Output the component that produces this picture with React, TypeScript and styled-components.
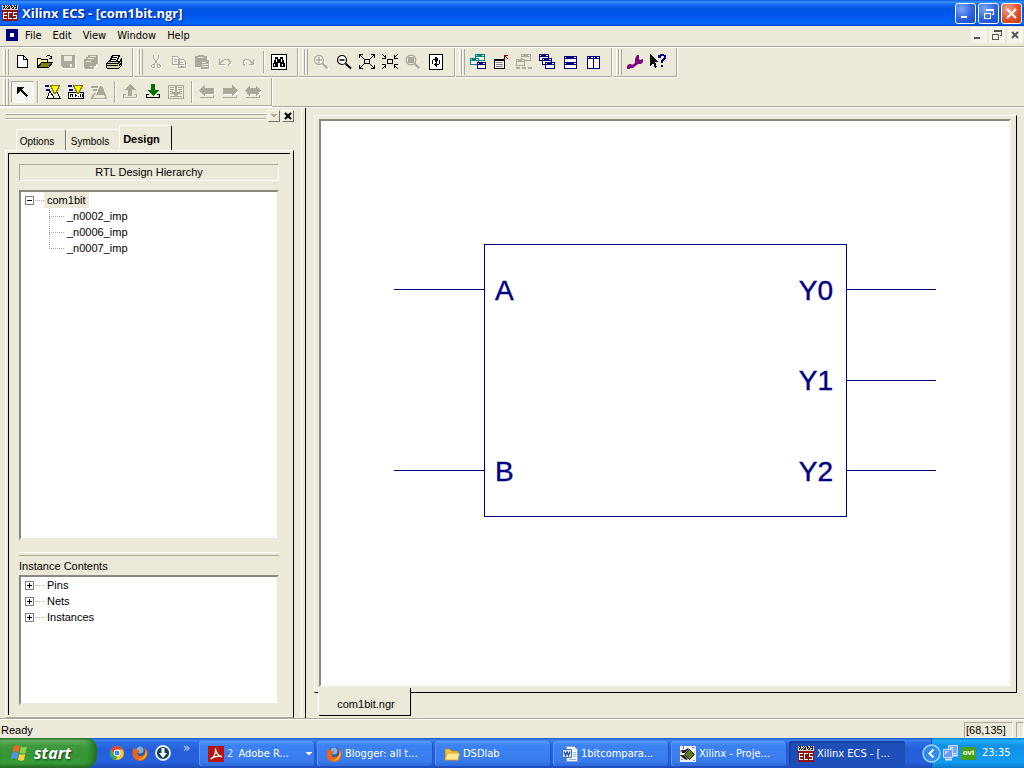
import React from "react";
import styled, { createGlobalStyle, css } from "styled-components";

const face = "#ece9d8";
const shade = "#aca899";
const deep = "#716f64";
const navy = "#000080";
const ui = `"DejaVu Sans Condensed", "Liberation Sans", sans-serif`;

const Global = createGlobalStyle`
  * { box-sizing: border-box; }
  html, body, #root { height: 100%; }
  body { margin: 0; background: ${face}; color: #000; font: 11px/16px "Liberation Sans", sans-serif; overflow: hidden; }
  button { font: inherit; color: inherit; padding: 0; margin: 0; border: 0; background: none; }
  ul { list-style: none; margin: 0; padding: 0; }
  svg { display: block; flex: none; }
`;

const Desktop = styled.div`
  display: flex;
  flex-direction: column;
  height: 100vh;
  min-height: 600px;
`;

/* ---------- title bar ---------- */
const TitleBar = styled.header`
  display: flex;
  align-items: center;
  height: 26px;
  padding: 0 2px;
  gap: 4px;
  background: linear-gradient(#0a5be0 0%, #3c96ff 8%, #1a6cf2 16%, #0054e3 35%, #0058ee 60%, #0466fc 85%, #0560f0 93%, #0038b8 100%);
`;
const TitleText = styled.h1`
  flex: 1;
  margin: 0;
  color: #fff;
  font: bold 13px/20px "Open Sans", "Noto Sans", sans-serif;
  text-shadow: 1px 1px 1px #0a1883;
`;
const WindowButton = styled.button<{ $close?: boolean }>`
  display: grid;
  place-items: center;
  width: 21px;
  height: 21px;
  border: 1px solid #fff;
  border-radius: 3px;
  background: ${(p) =>
    p.$close
      ? "radial-gradient(circle at 30% 25%, #f0a088, #e0532c 55%, #c03a12)"
      : "radial-gradient(circle at 30% 25%, #7ca6f4, #2e62e0 55%, #1646c8)"};
`;
const WindowButtons = styled.div`
  display: flex;
  gap: 2px;
`;

/* ---------- menu ---------- */
const MenuBar = styled.nav`
  display: flex;
  align-items: center;
  height: 21px;
  padding: 0 1px 2px 6px;
  border-bottom: 1px solid ${shade};
  box-shadow: 0 1px #fff;
  font-family: ${ui};
`;
const MenuItem = styled.button`
  height: 16px;
  padding: 0 5px;
`;
const MenuItems = styled.div`
  display: flex;
  flex: 1;
  gap: 1px;
  margin-left: 2px;
  padding-top: 1px;
`;
const ChildButton = styled.button`
  display: grid;
  place-items: center;
  width: 16px;
  height: 16px;
  padding: 0 1px 1px 0;
  background: #f5f3ea;
`;
const ChildButtons = styled.div`
  display: flex;
  gap: 2px;
`;

/* ---------- toolbars ---------- */
const Toolbars = styled.div`
  padding-top: 1px;
  border-bottom: 1px solid ${shade};
  box-shadow: 0 1px #fff;
`;
const ToolRow = styled.div`
  display: flex;
  height: 29px;
  & + & {
    margin-top: 1px;
    height: 28px;
  }
`;
const Band = styled.div`
  display: flex;
  align-items: center;
  padding: 0 6px 0 3px;
  border-right: 1px solid ${shade};
  border-bottom: 1px solid ${shade};
  box-shadow: 1px 0 #fff, 0 1px #fff;
  margin-right: 1px;
`;
const Grip = styled.span`
  display: flex;
  width: 6px;
  height: 26px;
  margin-right: 2px;
  &::before,
  &::after {
    content: "";
    width: 3px;
    border-left: 1px solid #fff;
    border-right: 1px solid ${shade};
  }
`;
const ToolButton = styled.button<{ $on?: boolean }>`
  display: grid;
  place-items: center;
  width: 23px;
  height: 22px;
  padding-right: 1px;
  ${(p) =>
    p.$on &&
    css`
      background: #f6f4ee;
      border: 1px solid;
      border-color: ${shade} #fff #fff ${shade};
    `}
`;
const Divider = styled.span`
  width: 2px;
  height: 22px;
  margin: 0 3px;
  border-left: 1px solid ${shade};
  border-right: 1px solid #fff;
`;

/* ---------- work area ---------- */
const Work = styled.main`
  flex: 1;
  min-height: 0;
  display: flex;
  padding-top: 1px;
`;
const Side = styled.aside`
  display: flex;
  flex-direction: column;
  width: 302px;
  padding: 1px 7px 0 5px;
  border-right: 1px solid #fff;
`;
const DockHead = styled.div`
  display: flex;
  align-items: center;
  height: 13px;
  gap: 2px;
`;
const DockGrip = styled.span`
  flex: 1;
  height: 6px;
  border: solid;
  border-width: 1px 0;
  border-color: #fff ${shade} ${shade} #fff;
  &::before {
    content: "";
    display: block;
    height: 4px;
    border-top: 1px solid ${shade};
    border-bottom: 1px solid #fff;
  }
`;
const DockButton = styled.button`
  display: grid;
  place-items: center;
  width: 12px;
  height: 12px;
  border: 1px solid;
  border-color: #fff ${deep} ${deep} #fff;
`;
const Tabs = styled.div`
  display: flex;
  align-items: flex-end;
  height: 28px;
  padding-left: 11px;
`;
const Tab = styled.button<{ $active?: boolean }>`
  width: 50px;
  height: 21px;
  padding: 3px 8px 0 0;
  border: solid;
  border-width: 1px 1px 0 1px;
  border-color: #fff ${deep} #fff #fff;
  border-radius: 2px 2px 0 0;
  font-size: 10px;
  &:nth-child(2) {
    width: 53px;
    padding-right: 6px;
    border-right: 0;
  }
  ${(p) =>
    p.$active &&
    css`
      width: 53px;
      height: 25px;
      padding-top: 1px;
      border-right-color: #000;
      font-size: 11px;
      font-weight: bold;
    `}
`;
const Page = styled.section`
  flex: 1;
  min-height: 0;
  display: flex;
  border: 1px solid;
  border-color: #fff #000 ${shade} #fff;
  padding: 2px 3px 2px 2px;
`;
const PageInner = styled.div`
  flex: 1;
  min-height: 0;
  display: flex;
  flex-direction: column;
  border: solid #000;
  border-width: 1px 0 0 1px;
  padding: 10px 11px 10px 10px;
`;
const Caption = styled.h2`
  margin: 0 0 9px;
  height: 17px;
  border: 1px solid;
  border-color: ${shade} #fff #fff ${shade};
  font: 11px/15px "Liberation Sans", sans-serif;
  text-align: center;
`;
const TreeBox = styled.ul<{ $fill?: boolean }>`
  ${(p) => (p.$fill ? "flex: 1; min-height: 0;" : "height: 130px;")}
  padding: 0 4px;
  background: #fff;
  border: 2px solid;
  border-color: #8a887c ${face} ${face} #8a887c;
`;
const Splitter = styled.div`
  height: 4px;
  margin: 12px 0 0;
  border-top: 1px solid #fff;
  border-bottom: 1px solid ${shade};
`;
const SubCaption = styled.h2`
  margin: 2px 0 1px;
  font: 11px/16px "Liberation Sans", sans-serif;
`;
const TreeRow = styled.div`
  display: flex;
  align-items: center;
  height: 16px;
`;
const Expander = styled.button`
  display: grid;
  place-items: center;
  width: 9px;
  height: 9px;
  border: 1px solid #808080;
  background: #fff;
`;
const Dots = styled.span`
  width: 9px;
  margin-left: 1px;
  border-top: 1px dotted ${shade};
`;
const TreeLabel = styled.span<{ $selected?: boolean }>`
  height: 16px;
  padding: 0 3px;
  background: ${(p) => (p.$selected ? face : "transparent")};
`;
const Branches = styled.ul`
  padding-left: 24px;
`;
const Elbow = styled.span<{ $last?: boolean }>`
  width: 15px;
  height: 16px;
  &::before {
    content: "";
    display: block;
    height: 8px;
    border-left: 1px dotted ${shade};
    border-bottom: 1px dotted ${shade};
  }
  &::after {
    content: "";
    display: ${(p) => (p.$last ? "none" : "block")};
    height: 8px;
    border-left: 1px dotted ${shade};
  }
`;

/* ---------- document ---------- */
const Document = styled.section`
  flex: 1;
  min-width: 0;
  display: flex;
  flex-direction: column;
  margin-left: 3px;
  padding: 7px 7px 0 8px;
  border-left: 1px solid #000;
`;
const Frame = styled.div`
  flex: 1;
  min-height: 0;
  padding: 3px 5px 5px 4px;
  border: 1px solid;
  border-color: #fff #000 #000 #fff;
`;
const Sheet = styled.div`
  display: flex;
  align-items: center;
  justify-content: center;
  height: 100%;
  padding-bottom: 45px;
  background: #fff;
  border: 2px solid;
  border-color: #8a887c #f6f4ec #f6f4ec #8a887c;
`;
const DocTabs = styled.div`
  display: flex;
  height: 25px;
  padding-left: 4px;
`;
const DocTab = styled.button`
  width: 93px;
  height: 28px;
  margin-top: -5px;
  padding: 5px 0 0 3px;
  background: ${face};
  border: solid;
  border-width: 0 1px 1px 1px;
  border-color: #fff #000 #000 #fff;
  border-radius: 0 0 0 3px;
`;

/* ---------- status bar ---------- */
const Status = styled.footer`
  display: flex;
  align-items: center;
  height: 20px;
  padding: 3px 0 0 1px;
  border-top: 1px solid ${shade};
  box-shadow: inset 0 1px #fff;
  gap: 3px;
`;
const Ready = styled.span`
  flex: 1;
`;
const Cell = styled.span<{ $w: number }>`
  width: ${(p) => p.$w}px;
  height: 16px;
  padding-left: 1px;
  line-height: 14px;
  border: 1px solid;
  border-color: ${shade} #fff #fff ${shade};
`;

/* ---------- taskbar ---------- */
const Taskbar = styled.nav`
  display: flex;
  align-items: stretch;
  height: 30px;
  color: #fff;
  font-family: ${ui};
  background: linear-gradient(#1d4fc0 0%, #3d86f0 7%, #2f6fe6 15%, #245edb 40%, #2660de 80%, #1d4cb8 100%);
`;
const Start = styled.button`
  display: flex;
  align-items: center;
  gap: 4px;
  width: 97px;
  padding-left: 10px;
  border-radius: 0 10px 12px 0;
  background: linear-gradient(#2f7a2f 0%, #6cbc6a 8%, #3f9a3e 25%, #359535 60%, #3a9f3a 85%, #256b25 100%);
  box-shadow: inset -4px 0 6px #1f6b22;
  font: italic bold 16px/24px "Noto Sans", sans-serif;
  text-shadow: 1px 1px 2px #153f15;
`;
const Quick = styled.div`
  display: flex;
  align-items: center;
  gap: 7px;
  width: 102px;
  padding-left: 12px;
`;
const QuickButton = styled.button`
  width: 16px;
  height: 16px;
`;
const Chevron = styled.button`
  height: 20px;
  margin-left: 5px;
  font-size: 13px;
  line-height: 12px;
  color: #c8dcff;
  align-self: flex-start;
`;
const Tasks = styled.div`
  flex: 1;
  min-width: 0;
  display: flex;
  gap: 2px;
  padding: 3px 0 2px;
`;
const Task = styled.button<{ $active?: boolean }>`
  flex: 0 1 116px;
  min-width: 0;
  display: flex;
  align-items: center;
  gap: 3px;
  padding: 0 2px 0 9px;
  border-radius: 3px;
  text-align: left;
  background: ${(p) =>
    p.$active ? "#1e4fb8" : "linear-gradient(#5a9bff 0%, #3c81f3 18%, #3a7cee 80%, #2e69d8 100%)"};
  box-shadow: ${(p) => (p.$active ? "inset 1px 1px 2px #12388a" : "inset 1px 0 #5c98fa, inset -1px 0 #2458c4")};
`;
const TaskText = styled.span`
  flex: 1;
  white-space: nowrap;
  overflow: hidden;
`;
const Count = styled.span`
  margin-right: 2px;
  color: #d8e4ff;
`;
const Tray = styled.div`
  display: flex;
  align-items: center;
  gap: 2px;
  width: 93px;
  margin-left: -1px;
  border-left: 1px solid #0a4aa8;
  background: linear-gradient(#0c7ac8 0%, #1eb0f5 8%, #1290e8 25%, #109cf0 80%, #0c78c8 100%);
`;
const TrayArrow = styled.button`
  margin-left: -10px;
`;
const Ovi = styled.span`
  width: 15px;
  height: 13px;
  margin-right: 4px;
  background: #47a01c;
  border-radius: 1px;
  font: bold 8px/12px "Liberation Sans", sans-serif;
  text-align: center;
`;

/* ---------- icons ---------- */
type Kids = { children: React.ReactNode; size?: number; smooth?: boolean };
const Ico = ({ children, size = 16, smooth }: Kids) => (
  <svg width={size} height={size} viewBox={`0 0 ${size} ${size}`} fill="none" shapeRendering={smooth ? "auto" : "crispEdges"} aria-hidden="true">
    {children}
  </svg>
);
const Off = ({ children, smooth }: Kids) => (
  <Ico smooth={smooth}>
    <g transform="translate(1 1)" stroke="#fff" fill="none">{children}</g>
    <g stroke={shade} fill="none">{children}</g>
  </Ico>
);
const Win = ({ x, y, c, w = 8, h = 7, fill = "#fff" }: { x: number; y: number; c: string; w?: number; h?: number; fill?: string }) => (
  <g>
    <rect x={x} y={y} width={w} height={h} fill={c} />
    <rect x={x + 1} y={y + 3} width={w - 2} height={h - 4} fill={fill} />
    <rect x={x + 1} y={y + 1} width="1" height="1" fill="#fff" />
    <rect x={x + w - 3} y={y + 1} width="2" height="1" fill="#fff" />
  </g>
);
const EcsIcon = () => (
  <Ico>
    <path fill="#d8d4cc" d="M0 0h16v5H0z" />
    <path stroke="#222" d="M1 .5h2M4 .5h1M6 .5h1M8 .5h2M12 .5h1M14 .5h1M2 1.500h1M5 1.500h1M7 1.500h1M9 1.500h2M12 1.500h3M1 2.500h2M4 2.500h1M6 2.500h2M9 2.500h1M11 2.500h1M14 2.500h1M1 3.500h1M3 3.500h1M5 3.500h3M10 3.500h2M13 3.500h2" />
    <path fill="#8c1414" d="M0 5h16v11H0z" />
    <path stroke="#fff" d="M5 7.500H1.500v6H5M2 10.500h3M10 7.500H6.500v6H10M15 7.500h-3.500v3h3v3H11" />
  </Ico>
);
const DocIcon = () => (
  <Ico size={12}>
    <path fill={navy} d="M0 0h12v12H0z" />
    <path fill="#fff" d="M4 4h4v4H4z" />
  </Ico>
);
const NewIcon = () => (
  <Ico>
    <path fill="#fff" stroke="#000" d="M3.500 1.500h6l4 4v8h-10z" />
    <path stroke="#000" d="M9.500 1.500v4h4" />
  </Ico>
);
const OpenIcon = () => (
  <Ico>
    <path fill="#ffffa0" stroke="#000" d="M.5 13.500v-9h3l1 1h6v3" />
    <path fill="#808000" stroke="#000" d="M.5 13.500l4-5h11l-4 5z" />
    <path stroke="#000" d="M9 2.500h1M10 1.500h3M13 2.500h1M14 3.500h1M12 4.500h3M14.500 2v3" />
  </Ico>
);
const SaveIcon = () => (
  <Ico>
    <path fill="#fff" d="M2 15h14V3h-1v11H2z" />
    <path fill={shade} d="M1 1h14v13H3l-2-2z" />
    <path fill={face} d="M4 2h8v5H4zM10 10h2v3h-2z" />
  </Ico>
);
const SaveAllIcon = () => (
  <Ico>
    <path fill="#fff" d="M3 16h9v-3h2v-3h2V2h-1v8z" />
    <path fill={shade} d="M5 1h10v9h-2v2h-2v3H2l-1-1V5h2V3h2z" />
    <path stroke={face} d="M7 2.500h6M5 4.500h6M3 7.500h5M7 12.500h2" />
  </Ico>
);
const PrintIcon = () => (
  <Ico>
    <path fill="#fff" stroke="#000" d="M3.500 7.500l3-6h7l-3 6" />
    <path stroke="#000" d="M6 3.500h5M5 5.500h5" />
    <path fill="#d8d4b8" stroke="#000" d="M.5 9.500l2-2h11l2-3v7l-3 3H2l-1.500-1z" />
    <path stroke="#000" d="M1 9.500h12M1 11.500h11M12.500 9l3-3M13 11.500l2-2" />
    <path stroke="#ee0" d="M8 10.500h2" />
  </Ico>
);
const CutIcon = () => (
  <Off><path d="M5.500 1v3l4 6M10.500 1v3l-4 6M4.500 10.500h2v3h-2l-1-1v-1zM9.500 10.500h2l1 2-1 1h-2z" /></Off>
);
const CopyIcon = () => (
  <Off><path d="M1.500 2.500h5l2 2v6h-7zM3 5.500h3M3 7.500h3M7.500 5.500h5l2 2v6h-7zM9 8.500h3M9 10.500h4M9 12h4" /></Off>
);
const PasteIcon = () => (
  <Ico>
    <path fill="#fff" d="M2 14h6v2h8V7h-2V3h1v3H2z" />
    <path fill={shade} d="M1 2h3V1h6v1h3v4h2v9H7v-2H1z" />
    <path stroke={face} d="M4 3.500h6M8 8.500h4M8 10.500h6M8 12.500h6" />
  </Ico>
);
const UndoIcon = () => (
  <Off><path d="M2.500 5v5h5M3 9.500l3-3 2-1h3l2 2v2l-2 2" /></Off>
);
const RedoIcon = () => (
  <Off><path d="M13.500 5v5h-5M13 9.500l-3-3-2-1H5l-2 2v2l2 2" /></Off>
);
const FindIcon = () => (
  <Ico>
    <path fill="#fff" stroke="#000" d="M.5.5h15v15H.5z" />
    <path fill="#000" d="M4 3h3v2h2V3h3v2l2 5v3H9V9H7v4H2v-3l2-5z" />
    <path stroke="#fff" d="M5.500 5v3M3.500 10v2M10.500 5v3M11.500 10v2" />
  </Ico>
);
const ZoomInIcon = () => (
  <Off smooth>
    <circle cx="6" cy="6" r="4.500" strokeWidth="1.300" />
    <path d="M3 6h6M6 3v6" strokeWidth="1.500" />
    <path d="M9.500 9.500l5 5" strokeWidth="2" />
  </Off>
);
const ZoomOutIcon = () => (
  <Ico smooth>
    <circle cx="6" cy="6" r="4.500" fill="#fff" stroke="#000" strokeWidth="1.200" />
    <path stroke="#000" strokeWidth="1.500" d="M3.500 6h5" />
    <path stroke="#000" strokeWidth="2" d="M9.500 9.500l5.500 5" />
  </Ico>
);
const ZoomAreaIcon = () => (
  <Ico smooth>
    <circle cx="7" cy="7" r="4.500" stroke="#fff" />
    <path stroke="#fff" strokeWidth="2" d="M10.500 10.500l5 5" />
    <circle cx="6" cy="6" r="4.800" stroke={shade} strokeWidth="1.400" />
    <path fill={shade} d="M3 3h6v6H3z" />
    <path stroke={shade} strokeWidth="2.200" d="M9.500 9.500l5 5" />
  </Ico>
);
const ExpandIcon = () => (
  <Ico>
    <path stroke="#000" d="M5.500 5.500h5v4h-5zM1 1l4 4M15 1l-4 4M1 14l4-4M15 14l-4-4" />
    <path fill="#000" d="M0 0h4v1H2v1H1v2H0zM16 0h-4v1h2v1h1v2h1zM0 15h4v-1H2v-1H1v-2H0zM16 15h-4v-1h2v-1h1v-2h1z" />
  </Ico>
);
const ShrinkIcon = () => (
  <Ico>
    <path stroke="#000" d="M5.500 5.500h5v4h-5zM0 0l4 4M16 0l-4 4M0 15l4-4M16 15l-4-4" />
    <path fill="#000" d="M4 1v4H0V4h3V1zM12 1v4h4V4h-3V1zM4 14v-4H0v1h3v3zM12 14v-4h4v1h-3v3z" />
  </Ico>
);
const RefreshIcon = () => (
  <Ico>
    <path fill="#fff" stroke="#000" d="M1.500.5h13v15h-13z" />
    <path stroke="#000" d="M4.500 10V6.500l1-1H8M11.500 6v3.500l-1 1H8" />
    <path fill="#000" d="M7 3h1l2 2v1L8 8H7zM9 8H8l-2 2v1l2 2h1z" />
  </Ico>
);
const CascadeTealIcon = () => (
  <Ico><Win x={5} y={0} c="#008080" w={10} /><Win x={0} y={4} c="#008080" w={9} /><Win x={7} y={8} c={navy} w={9} h={7} /></Ico>
);
const PropIcon = () => (
  <Ico>
    <path fill="#fff" stroke="#000" d="M1.500 5.500h10v9h-10z" />
    <path fill="#000" d="M1 5h11v2H1z" />
    <path stroke="#808080" d="M3 8.500h7M3 10.500h7M3 12.500h7" />
    <path stroke="#800000" d="M15 5l-3-3M11 1.500h4M11.500 1v4" />
  </Ico>
);
const ArrangeOffIcon = () => (
  <Ico><Win x={5} y={0} c={shade} w={10} fill={face} /><Win x={0} y={5} c={shade} w={9} fill={face} /><path stroke={shade} strokeWidth="2" d="M0 14h4M6 14h4M12 14h4" /></Ico>
);
const CascadeIcon = () => (
  <Ico><Win x={0} y={0} c={navy} w={10} /><Win x={3} y={4} c={navy} w={10} /><Win x={6} y={8} c={navy} w={10} /></Ico>
);
const TileHIcon = () => (
  <Ico><Win x={2} y={2} c={navy} w={13} h={7} /><Win x={2} y={8} c={navy} w={13} h={7} /></Ico>
);
const TileVIcon = () => (
  <Ico><Win x={2} y={2} c={navy} w={7} h={13} /><Win x={8} y={2} c={navy} w={7} h={13} /></Ico>
);
const WrenchIcon = () => (
  <Ico smooth>
    <path fill="#800080" d="M10 1h2v4l1 1 3-1v3l-2 2h-3l-5 4H3v1H0v-3l2-2h2l1 1 3-2V5z" />
  </Ico>
);
const HelpIcon = () => (
  <Ico>
    <path fill="#000" d="M0 0l8 8H5l2 5-2 1-2-5-3 3z" />
    <path fill={navy} d="M8 1h2V0h4v1h2v4h-1v1h-1v1h-1v2h-2V6h1V5h1V4h1V2h-3v2H8zM11 11h2v2h-2z" />
  </Ico>
);
const PointerIcon = () => (
  <Ico><path fill="#000" d="M3 3h7v1L8 5.500l6 6L12.500 13l-6-6L4 10H3z" /></Ico>
);
const Flag = ({ c }: { c: string }) => (
  <g>
    <path fill={navy} d="M0 1h4v2H0zM1 5h4v2H1z" />
    <path fill={c} stroke="#808000" d="M5.500 1.500h9l-4 8h-1z" />
  </g>
);
const FlagIcon = () => (
  <Ico><path fill="#fff" stroke="#000" d="M.5 14.500h15M2 14l3-7 4 7M12 8l3 6" /><Flag c="#ff0" /></Ico>
);
const FlagHdlIcon = () => (
  <Ico><path fill="#fff" stroke="#000" d="M.5 8.500h15v6H.5z" /><path stroke="#000" d="M2.500 13v-3h2v3M7.500 10v3M6.500 11h2M10 12.500h1M12.500 10v3M14 10v3" /><Flag c="#ff0" /></Ico>
);
const FlagOffIcon = () => (
  <Ico>
    <path stroke="#fff" d="M1 15.500h15M2 4.500h3" />
    <path fill={shade} d="M9 2h2l4 9H5zM0 2h7v2H0zM2 5h4v2H2zM0 14h16v1H0zM3 9h2l-3 5H0zM13 10h1l2 4h-2z" />
  </Ico>
);
const UpOffIcon = () => (
  <Ico><path stroke="#fff" d="M2 14.500h14M15 12v3" /><path fill={shade} d="M8 0l6 6h-4v6H6V6H2zM1 10h3v1H2v2h12v-2h-2v-1h3v4H1z" /></Ico>
);
const DownIcon = () => (
  <Ico><path stroke="#000" d="M4 10.500H1.500v3h13v-3H12" /><path fill="#007000" d="M6 0h4v6h4l-6 6-6-6h4z" /></Ico>
);
const PairOffIcon = () => (
  <Ico>
    <path fill={shade} d="M0 1h7v1H1v12h14V2H9V1h7v14H0z" />
    <path stroke={shade} d="M2 3.500h4M2 5.500h4M2 7.500h3M10 3.500h4M10 5.500h4M11 7.500h3M2 9.500h3M11 9.500h3M2 12.500h12" />
    <path fill={shade} d="M7 1h2v7h3l-4 5-4-5h3z" />
  </Ico>
);
const ArrowOff = ({ d }: { d: string }) => (
  <Ico>
    <path fill="#fff" transform="translate(1 1)" d={d} />
    <path fill={shade} d={d} />
    <path stroke={shade} d="M1 13.500h14M14.500 11v3" />
  </Ico>
);
const LeftOffIcon = () => <ArrowOff d="M0 6.500L6 1v3h9v6H6v3z" />;
const RightOffIcon = () => <ArrowOff d="M16 6.500L10 1v3H1v6h9v3z" />;
const BothOffIcon = () => <ArrowOff d="M0 6.500L5 1v3h6V1l5 5.500L11 13v-3H5v3z" />;

const Minimise = ({ c }: { c: string }) => <Ico size={11}><path fill={c} d="M1 8h6v2H1z" /></Ico>;
const Restore = ({ c }: { c: string }) => (
  <Ico size={11}><path stroke={c} d="M1.500 5v5.500h6v-5h-6M1 5h7M3.500 3V1.500h7v5H9M3 2h8" /></Ico>
);
const Cross = ({ c }: { c: string }) => <Ico size={11} smooth><path stroke={c} strokeWidth="2" d="M1 1l9 9M10 1l-9 9" /></Ico>;
const SmallCross = ({ c }: { c: string }) => <Ico size={8} smooth><path stroke={c} strokeWidth="2" d="M1 1l6 6M7 1l-6 6" /></Ico>;
const DownTriangle = ({ c }: { c: string }) => <Ico size={8}><path fill={c} d="M1 2h6v1H6v1H5v1H3V4H2V3H1z" /></Ico>;

const WindowsFlag = () => (
  <Ico size={20} smooth>
    <path fill="#f0642c" d="M4 3c2-1 4-1 6 0L8.500 9c-2-1-4-1-6 0z" />
    <path fill="#8cd048" d="M11 3.500c2 1 4 1 6 0L15.500 10c-2 1-4 1-6 0z" />
    <path fill="#5a90f4" d="M2.300 10c2-1 4-1 6 0L7 16c-2-1-4-1-6 0z" />
    <path fill="#fbd33c" d="M9.300 11c2 1 4 1 6 0L14 17c-2 1-4 1-6 0z" />
  </Ico>
);
const ChromeIcon = () => (
  <Ico smooth>
    <circle cx="8" cy="8" r="7" fill="#f5c929" />
    <path fill="#db4437" d="M1.900 4.500A7 7 0 0114.100 4.500H8L5 9.500z" />
    <path fill="#3aa757" d="M1.900 4.500L5 9.800l3.500 1L7 15A7 7 0 011.900 4.500z" />
    <circle cx="8" cy="8" r="3.400" fill="#fff" />
    <circle cx="8" cy="8" r="2.500" fill="#4a87ee" />
  </Ico>
);
const FirefoxIcon = () => (
  <Ico smooth>
    <circle cx="8" cy="8" r="7" fill="#2a5aa8" />
    <circle cx="8" cy="5" r="3.500" fill="#78b4ea" />
    <path fill="#e8641b" d="M1 3l1.500 1.500L4 2l1 3 3 .5-1 2-2 1 2 2.500h3l3-2.500V5l-1-2.500C15 4 16 6.500 15.500 9.500 14.500 14 11 16 8 16 3.500 16 .5 12.500.5 8.500z" />
    <path fill="#fbb82c" d="M14 5c1.500 3 .5 6.500-2 8.500-2 1.500-5 1.500-7 0 4 1 8-.5 9-8.500z" />
  </Ico>
);
const DownloadIcon = () => (
  <Ico smooth>
    <circle cx="8" cy="8" r="7" fill="#123f5c" stroke="#e8f4fa" strokeWidth="1.800" />
    <path fill="#fff" d="M6.500 3h3v5H12l-4 5-4-5h2.500z" />
  </Ico>
);
const PdfIcon = () => (
  <Ico smooth>
    <path fill="#b8140e" d="M0 0h16v16H0z" />
    <path stroke="#fff" strokeWidth="1.300" d="M2.500 13c3-1.500 5.500-5.500 5-10.500 0 4 2.500 7.500 6.500 8-4-.8-8 0-11.500 2.500z" />
  </Ico>
);
const FolderIcon = () => (
  <Ico smooth>
    <path fill="#f2c63c" stroke="#a87c14" strokeWidth=".7" d="M1 3h5l1.500 2H14v9H1z" />
    <path fill="#ffe88c" stroke="#c89a28" strokeWidth=".7" d="M3 7h12.500L14 14H1z" />
  </Ico>
);
const WordIcon = () => (
  <Ico smooth>
    <path fill="#f6f8ff" stroke="#8aa0cc" d="M4.500.5h8l3 3v12h-11z" />
    <path stroke="#9ab0dc" d="M11 6.500h3M11 8.500h3M7 13.500h7M11 10.500h3" />
    <path fill="#dce8fb" stroke="#4870b8" d="M.5 3.500h9v8h-9z" />
    <path stroke="#244c9c" strokeWidth="1.300" d="M2 5.500l1.500 4L5 6l1.500 3.500L8 5.500" />
  </Ico>
);
const ProjectIcon = () => (
  <Ico smooth>
    <path fill="#f4f4f4" d="M0 0h16v16H0z" />
    <path fill="#222" d="M1 4h4l3-2 1 1-4 4H2zM0 9h4l4 4-2 1-3-2z" />
    <path fill="#5c7a1c" stroke="#222" d="M9.500 3.500l5 5-5 5-5-5z" />
    <path stroke="#999" d="M3.500 0v3M0 5.500h2M12 1.500h3M1 13.500h2M13 14.500h2" />
  </Ico>
);
const TrayArrowIcon = () => (
  <Ico size={19} smooth>
    <circle cx="9.500" cy="9.500" r="8.500" fill="#2f8df0" stroke="#a8dcff" strokeWidth="1.400" />
    <path stroke="#fff" strokeWidth="2" d="M11.500 5.500l-4 4 4 4" />
  </Ico>
);
const NetworkIcon = () => (
  <Ico smooth>
    <path fill="#7aa8f4" stroke="#d0e0fa" d="M5.500.5h9v8h-9z" />
    <path fill="#c0d8fc" d="M7 2h4L7 6z" />
    <path fill="#6c9cf0" stroke="#d0e0fa" d="M.5 4.500h9v8h-9z" />
    <path fill="#c0d8fc" d="M2 6h4l-4 4z" />
    <path stroke="#d4e2f8" strokeWidth="2" d="M2 14.500h7M10 10.500h5" />
  </Ico>
);

/* ---------- data ---------- */
type Tool = [string, () => React.JSX.Element] | null;
const topBands: Tool[][] = [
  [["New", NewIcon], ["Open", OpenIcon], ["Save", SaveIcon], ["Save All", SaveAllIcon], ["Print", PrintIcon]],
  [["Cut", CutIcon], ["Copy", CopyIcon], ["Paste", PasteIcon], ["Undo", UndoIcon], ["Redo", RedoIcon], null, ["Find", FindIcon]],
  [["Zoom In", ZoomInIcon], ["Zoom Out", ZoomOutIcon], ["Zoom Full", ExpandIcon], ["Zoom Selected", ShrinkIcon], ["Zoom Box", ZoomAreaIcon], ["Refresh", RefreshIcon]],
  [["New Window", CascadeTealIcon], ["Properties", PropIcon], ["Arrange", ArrangeOffIcon], ["Cascade", CascadeIcon], ["Tile Horizontally", TileHIcon], ["Tile Vertically", TileVIcon]],
  [["Preferences", WrenchIcon], ["Context Help", HelpIcon]],
];
const lowerBands: Tool[][] = [
  [["Select", PointerIcon], null, ["Add Symbol", FlagIcon], ["View HDL", FlagHdlIcon], ["Edit Symbol", FlagOffIcon], null, ["Pop", UpOffIcon], ["Push", DownIcon], ["Hierarchy", PairOffIcon], null, ["Back", LeftOffIcon], ["Forward", RightOffIcon], ["Both Ways", BothOffIcon]],
];
const tasks: { text: string; Icon: () => React.JSX.Element; count?: string; active?: boolean }[] = [
  { text: "Adobe R...", Icon: PdfIcon, count: "2" },
  { text: "Blogger: all t...", Icon: FirefoxIcon },
  { text: "DSDlab", Icon: FolderIcon },
  { text: "1bitcompara...", Icon: WordIcon },
  { text: "Xilinx - Proje...", Icon: ProjectIcon },
  { text: "Xilinx ECS - [...", Icon: EcsIcon, active: true },
];

const ToolBands = ({ bands }: { bands: Tool[][] }) => (
  <ToolRow>
    {bands.map((band, i) => (
      <Band key={i} role="toolbar">
        <Grip />
        {band.map((tool, j) => {
          if (!tool) return <Divider key={j} />;
          const [name, Icon] = tool;
          return (
            <ToolButton key={j} aria-label={name} $on={name === "Select"}>
              <Icon />
            </ToolButton>
          );
        })}
      </Band>
    ))}
  </ToolRow>
);

const Toggle = ({ open }: { open?: boolean }) => (
  <Expander aria-label={open ? "Collapse" : "Expand"}>
    <Ico size={7}>
      <path stroke="#000" d={open ? "M1 3.500h5" : "M1 3.500h5M3.500 1v5"} />
    </Ico>
  </Expander>
);

const Schematic = () => (
  <svg width="542" height="273" viewBox="0 0 542 273" role="img" aria-label="com1bit block">
    <g fill="none" stroke={navy} shapeRendering="crispEdges">
      <rect x="90.500" y=".5" width="362" height="272" />
      <path d="M0 45.500h90M0 226.500h90M453 45.500h89M453 136.500h89M453 226.500h89" />
    </g>
    <g fill={navy} stroke={navy} strokeWidth=".4" fontFamily="Liberation Sans, sans-serif" fontSize="28">
      <text x="101" y="56">A</text>
      <text x="101" y="237">B</text>
      <text x="439" y="56" textAnchor="end">Y0</text>
      <text x="439" y="146" textAnchor="end">Y1</text>
      <text x="439" y="237" textAnchor="end">Y2</text>
    </g>
  </svg>
);

export default function App() {
  return (
    <Desktop>
      <Global />
      <TitleBar>
        <EcsIcon />
        <TitleText>Xilinx ECS - [com1bit.ngr]</TitleText>
        <WindowButtons>
          <WindowButton aria-label="Minimize"><Minimise c="#fff" /></WindowButton>
          <WindowButton aria-label="Restore"><Restore c="#fff" /></WindowButton>
          <WindowButton aria-label="Close" $close><Cross c="#fff" /></WindowButton>
        </WindowButtons>
      </TitleBar>
      <MenuBar>
        <DocIcon />
        <MenuItems>
          {["File", "Edit", "View", "Window", "Help"].map((m) => <MenuItem key={m}>{m}</MenuItem>)}
        </MenuItems>
        <ChildButtons>
          <ChildButton aria-label="Minimize document"><Minimise c="#555" /></ChildButton>
          <ChildButton aria-label="Restore document"><Restore c="#555" /></ChildButton>
          <ChildButton aria-label="Close document"><SmallCross c="#555" /></ChildButton>
        </ChildButtons>
      </MenuBar>
      <Toolbars>
        <ToolBands bands={topBands} />
        <ToolBands bands={lowerBands} />
      </Toolbars>
      <Work>
        <Side>
          <DockHead>
            <DockGrip />
            <DockButton aria-label="Dock menu"><DownTriangle c={shade} /></DockButton>
            <DockButton aria-label="Close panel"><SmallCross c="#000" /></DockButton>
          </DockHead>
          <Tabs role="tablist">
            <Tab role="tab">Options</Tab>
            <Tab role="tab">Symbols</Tab>
            <Tab role="tab" $active aria-selected>Design</Tab>
          </Tabs>
          <Page>
            <PageInner>
              <Caption>RTL Design Hierarchy</Caption>
              <TreeBox $fill>
                <li>
                  <TreeRow>
                    <Toggle open />
                    <Dots />
                    <TreeLabel $selected>com1bit</TreeLabel>
                  </TreeRow>
                  <Branches>
                    {["_n0002_imp", "_n0006_imp", "_n0007_imp"].map((n, i) => (
                      <li key={n}>
                        <TreeRow>
                          <Elbow $last={i === 2} />
                          <TreeLabel>{n}</TreeLabel>
                        </TreeRow>
                      </li>
                    ))}
                  </Branches>
                </li>
              </TreeBox>
              <Splitter />
              <SubCaption>Instance Contents</SubCaption>
              <TreeBox>
                {["Pins", "Nets", "Instances"].map((n) => (
                  <li key={n}>
                    <TreeRow>
                      <Toggle />
                      <Dots />
                      <TreeLabel>{n}</TreeLabel>
                    </TreeRow>
                  </li>
                ))}
              </TreeBox>
            </PageInner>
          </Page>
        </Side>
        <Document>
          <Frame>
            <Sheet>
              <Schematic />
            </Sheet>
          </Frame>
          <DocTabs>
            <DocTab>com1bit.ngr</DocTab>
          </DocTabs>
        </Document>
      </Work>
      <Status>
        <Ready>Ready</Ready>
        <Cell $w={49}>[68,135]</Cell>
        <Cell $w={8} />
      </Status>
      <Taskbar>
        <Start><WindowsFlag />start</Start>
        <Quick>
          <QuickButton aria-label="Chrome"><ChromeIcon /></QuickButton>
          <QuickButton aria-label="Firefox"><FirefoxIcon /></QuickButton>
          <QuickButton aria-label="Downloads"><DownloadIcon /></QuickButton>
          <Chevron>»</Chevron>
        </Quick>
        <Tasks>
          {tasks.map(({ text, Icon, count, active }) => (
            <Task key={text} $active={active}>
              <Icon />
              <TaskText>{count && <Count>{count} </Count>}{text}</TaskText>
              {count && <DownTriangle c="#fff" />}
            </Task>
          ))}
        </Tasks>
        <Tray>
          <TrayArrow aria-label="Show hidden icons"><TrayArrowIcon /></TrayArrow>
          <NetworkIcon />
          <Ovi>ovi</Ovi>
          <time>23:35</time>
        </Tray>
      </Taskbar>
    </Desktop>
  );
}
